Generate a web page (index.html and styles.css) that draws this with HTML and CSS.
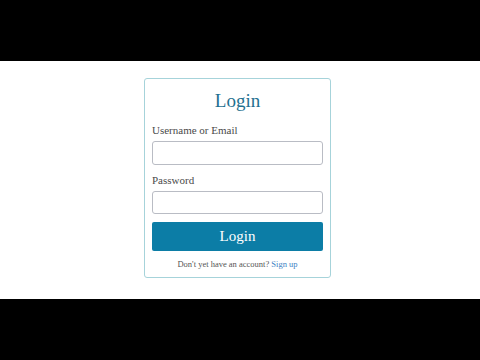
FILE: index.html
```html
<!DOCTYPE html>
<html>
<head>
<meta charset="utf-8">
<link rel="stylesheet" href="styles.css">
</head>
<body>
<div class="band">
  <form class="card">
    <h1 class="title">Login</h1>
    <label class="label">Username or Email</label>
    <input class="field" type="text">
    <label class="label label-second">Password</label>
    <input class="field" type="password">
    <button class="btn" type="button">Login</button>
    <p class="foot">Don't yet have an account? <a class="link" href="#">Sign up</a></p>
  </form>
</div>
</body>
</html>
```
FILE: styles.css
```css
html, body {
  margin: 0;
  padding: 0;
  background: #000;
  width: 480px;
  height: 360px;
  overflow: hidden;
}
.band {
  margin-top: 61px;
  height: 238px;
  background: #fff;
  display: flex;
  justify-content: flex-start;
  align-items: flex-start;
  font-family: "Liberation Serif", "DejaVu Serif", serif;
}
.card {
  box-sizing: border-box;
  width: 187px;
  margin: 17px 0 0 144px;
  border: 1px solid #a6d3da;
  border-radius: 3px;
  padding: 0 7px 7px;
  display: flex;
  flex-direction: column;
}
.title {
  margin: 10px 0 0;
  font-size: 19px;
  line-height: 24px;
  font-weight: normal;
  color: #1f7191;
  text-align: center;
}
.label {
  margin-top: 11px;
  font-size: 11px;
  line-height: 12px;
  color: #4a4a4a;
}
.label-second {
  margin-top: 9px;
}
.field {
  box-sizing: border-box;
  margin: 5px 0 0;
  height: 24px;
  width: 100%;
  border: 1px solid #b9bcc4;
  border-radius: 3px;
  background: #fff;
  padding: 0 6px;
  outline: none;
}
.field + .label-second + .field {
  height: 23px;
}
.btn {
  margin-top: 8px;
  height: 29px;
  border: none;
  border-radius: 2px;
  background: #0c7da6;
  color: #fff;
  font-family: "Liberation Serif", "DejaVu Serif", serif;
  font-size: 15px;
  padding: 0;
}
.foot {
  margin: 7px 0 0;
  font-size: 8.5px;
  line-height: 12px;
  color: #555;
  text-align: center;
}
.link {
  color: #3c82c4;
  text-decoration: none;
}
```
